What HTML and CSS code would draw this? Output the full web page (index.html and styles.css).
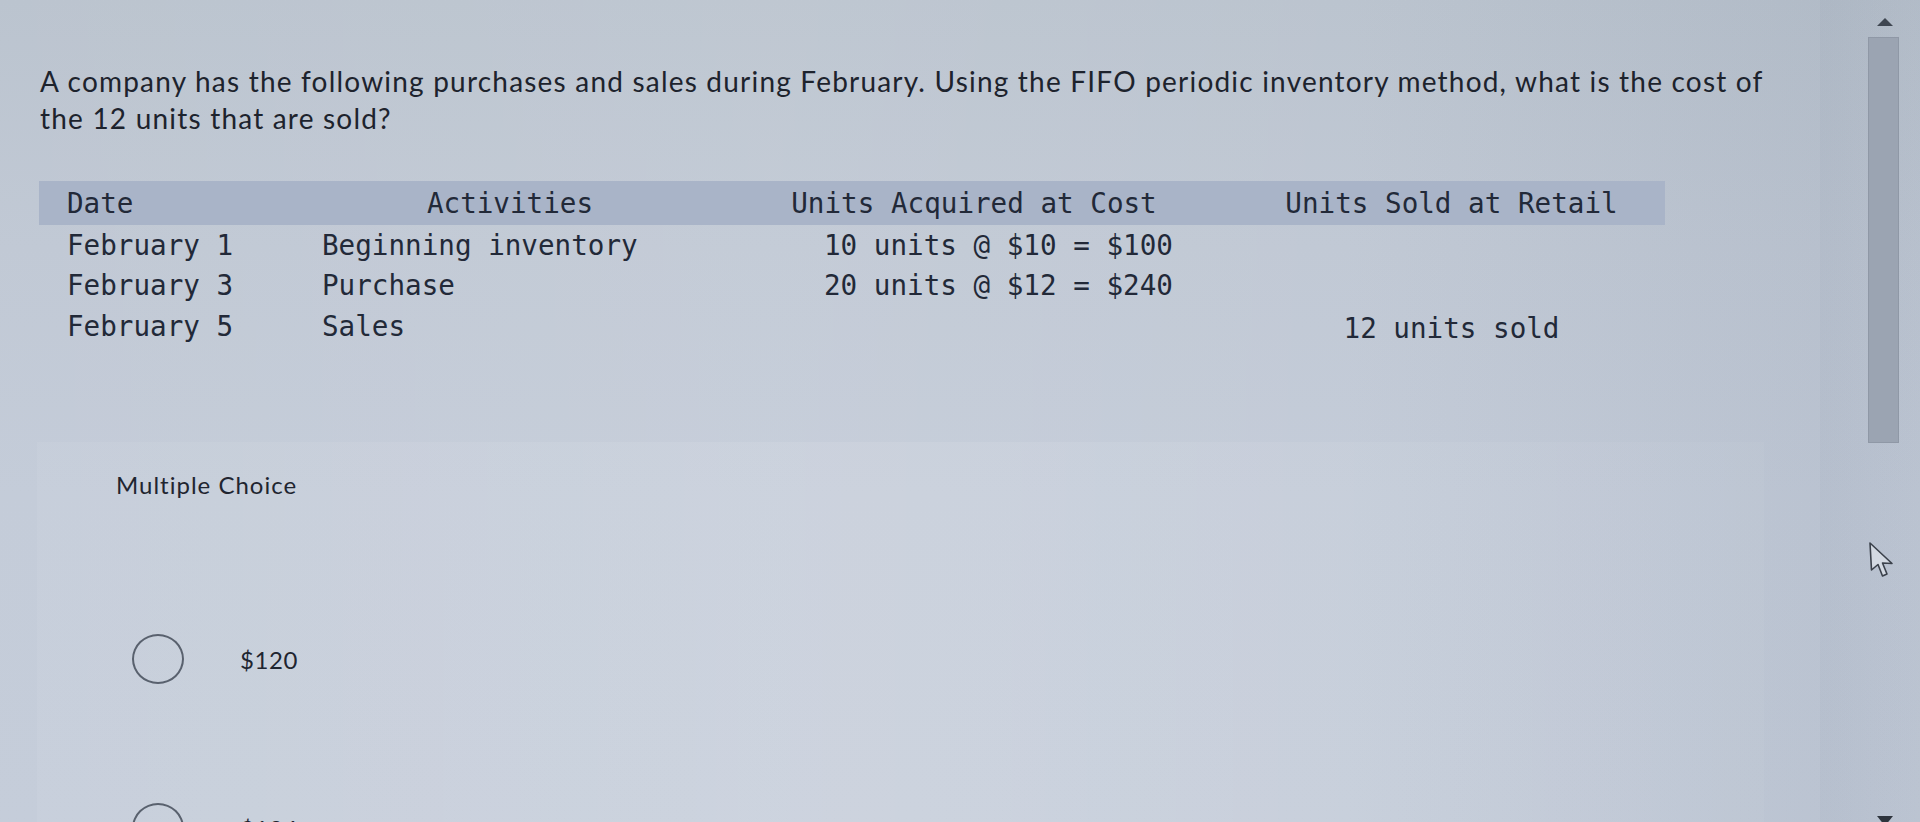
FILE: index.html
```html
<!DOCTYPE html>
<html lang="en">
<head>
<meta charset="utf-8">
<title>FIFO periodic inventory question</title>
<link rel="stylesheet" href="styles.css">
</head>
<body>
<div class="screen">
  <main class="content">
    <p class="question">A company has the following purchases and sales during February. Using the FIFO periodic inventory method, what is the cost of the 12 units that are sold?</p>

    <table class="activity">
      <colgroup>
        <col class="c-date">
        <col class="c-act">
        <col class="c-acq">
        <col class="c-sold">
      </colgroup>
      <thead>
        <tr>
          <th class="col-date">Date</th>
          <th class="col-center">Activities</th>
          <th class="col-center">Units Acquired at Cost</th>
          <th class="col-center">Units Sold at Retail</th>
        </tr>
      </thead>
      <tbody>
        <tr>
          <td class="col-date">February 1</td>
          <td class="col-act">Beginning inventory</td>
          <td class="col-acq">10 units @ $10 = $100</td>
          <td class="col-center"></td>
        </tr>
        <tr>
          <td class="col-date">February 3</td>
          <td class="col-act">Purchase</td>
          <td class="col-acq">20 units @ $12 = $240</td>
          <td class="col-center"></td>
        </tr>
        <tr>
          <td class="col-date">February 5</td>
          <td class="col-act">Sales</td>
          <td class="col-acq"></td>
          <td class="col-center sold">12 units sold</td>
        </tr>
      </tbody>
    </table>

    <section class="mc">
      <h2 class="mc-title">Multiple Choice</h2>
      <ul class="options">
        <li class="option"><span class="radio"></span><span class="option-label">$120</span></li>
        <li class="option"><span class="radio"></span><span class="option-label">$124</span></li>
      </ul>
    </section>
  </main>

  <aside class="scrollbar">
    <span class="arrow arrow-up"></span>
    <div class="thumb"></div>
    <span class="arrow arrow-down"></span>
  </aside>

  <svg class="cursor" width="28" height="40" viewBox="0 0 28 40">
    <path d="M2 2 L3.5 29 L10 23.5 L14.5 35 L19 33 L14.5 22 L24 22.5 Z" fill="#d3d9e2" stroke="#3b414b" stroke-width="1.6" stroke-linejoin="round"/>
  </svg>
</div>
</body>
</html>
```

FILE: styles.css
```css
html, body {
  margin: 0;
  padding: 0;
}

body {
  width: 1920px;
  height: 822px;
  overflow: hidden;
  font-family: "Lato", "Open Sans", "Liberation Sans", sans-serif;
  color: #1d232d;
}

.screen {
  position: relative;
  display: flex;
  width: 1920px;
  height: 822px;
  overflow: hidden;
  background:
    linear-gradient(90deg, rgba(255,255,255,0.02) 0%, rgba(255,255,255,0.07) 40%, rgba(255,255,255,0.02) 70%, rgba(40,60,90,0.07) 100%),
    linear-gradient(180deg, #bac3ce 0%, #c0c8d4 30%, #c3cbd8 60%, #c4ccd9 100%);
}

.content {
  width: 1820px;
  box-sizing: border-box;
  padding: 0 56px 0 37px;
  flex: none;
}

.question {
  margin: 0 -20px 0 0;
  padding: 63px 0 0 3px;
  font-size: 28px;
  line-height: 37px;
  letter-spacing: 1.2px;
}

.activity {
  margin: 44px 0 0 2px;
  width: 1626px;
  border-collapse: collapse;
  table-layout: fixed;
  font-family: "DejaVu Sans Mono", "Liberation Mono", monospace;
  font-size: 27.6px;
  color: #222938;
}

.c-date { width: 271px; }
.c-act { width: 400px; }
.c-acq { width: 528px; }
.c-sold { width: 427px; }

.activity thead tr {
  background: #a9b4c8;
}

.activity th {
  height: 44px;
  padding: 0;
  font-weight: normal;
  vertical-align: middle;
}

.activity td {
  height: 40px;
  padding: 0;
  vertical-align: middle;
  white-space: pre;
}

.col-date {
  text-align: left;
  padding-left: 28px !important;
}

.col-center {
  text-align: center;
}

.col-act {
  text-align: left;
  padding-left: 12px !important;
}

.col-acq {
  text-align: left;
  padding-left: 114px !important;
}

.sold {
  padding-top: 3px !important;
}

.mc {
  margin-top: 94px;
  height: 420px;
  box-sizing: border-box;
  padding: 28px 0 0 79px;
  background: linear-gradient(90deg, rgba(255,255,255,0.05), rgba(255,255,255,0.09) 50%, rgba(255,255,255,0.03));
}

.mc-title {
  margin: 0;
  font-size: 24px;
  line-height: 30px;
  letter-spacing: 1px;
  font-weight: normal;
  color: #1f2530;
}

.options {
  list-style: none;
  margin: 134px 0 0 16px;
  padding: 0;
  display: flex;
  flex-direction: column;
  gap: 119px;
}

.option {
  display: flex;
  align-items: center;
  height: 50px;
}

.radio {
  width: 52px;
  height: 50px;
  box-sizing: border-box;
  border: 2.5px solid #59616e;
  border-radius: 50%;
  flex: none;
}

.option-label {
  margin-left: 56px;
  font-size: 24px;
  letter-spacing: 0.6px;
  color: #1f2530;
}

.scrollbar {
  flex: none;
  width: 100px;
  display: flex;
  flex-direction: column;
  padding-top: 18px;
  box-sizing: border-box;
  background: linear-gradient(90deg, rgba(40,60,90,0.03), rgba(255,255,255,0.03));
}

.arrow {
  display: block;
  width: 0;
  height: 0;
  margin-left: 57px;
  border-left: 8px solid transparent;
  border-right: 8px solid transparent;
}

.arrow-up {
  border-bottom: 8px solid #3f4651;
}

.arrow-down {
  margin-top: auto;
  margin-bottom: -4px;
  border-top: 10px solid #2e343d;
}

.thumb {
  margin: 11px 0 0 48px;
  width: 31px;
  height: 406px;
  box-sizing: border-box;
  background: #9ba4b2;
  border: 1px solid #8f98a6;
}

.cursor {
  position: absolute;
  left: 1868px;
  top: 541px;
}
```
